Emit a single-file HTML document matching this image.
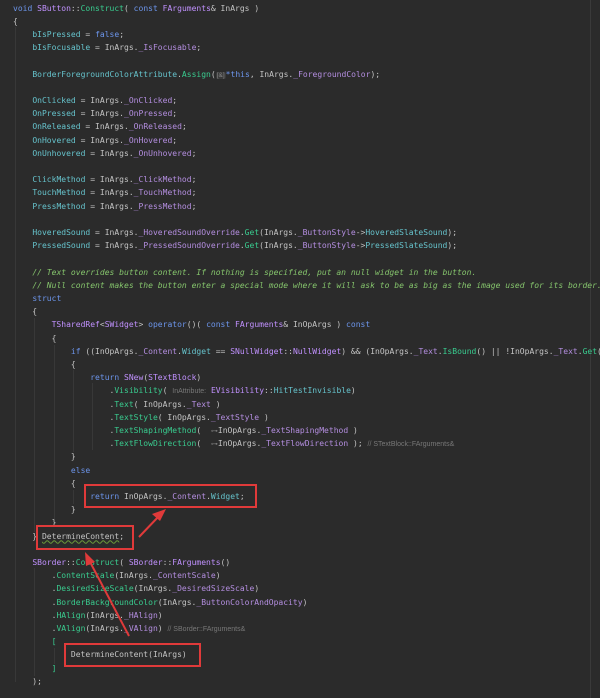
<!DOCTYPE html>
<html><head><meta charset="utf-8"><style>
html,body{margin:0;padding:0;background:#2b2b2b;width:600px;height:698px;overflow:hidden;position:relative}
pre{position:absolute;left:13px;top:1.5px;margin:0;font-family:"DejaVu Sans Mono","Liberation Mono",monospace;font-size:8.02px;line-height:13.21px;color:#c4c4c4;white-space:pre}
pre span{line-height:1}
.k{color:#6c95eb}.t{color:#c191ff}.m{color:#39cc8f}.f{color:#66c3cc}.c{color:#85c46c;font-style:italic}.p{color:#b48ee0}
.h{font-family:"Liberation Sans",sans-serif;font-size:7px;color:#787878}
.hb{font-family:"Liberation Sans",sans-serif;font-size:6.5px;color:#888;background:#3a3a3a;border-radius:2px;padding:0 1px}
.w{text-decoration:underline wavy #6a9a3a;text-decoration-thickness:1px}
.g{position:absolute;width:1px;background:#383838}
.box{position:absolute;border:2px solid #e03a3a;box-sizing:border-box}
.margin{position:absolute;left:590px;top:0;width:1px;height:698px;background:#3a3a3a}
</style></head><body>
<div class="margin"></div>
<div class="g" style="left:15px;top:27px;height:655px"></div>
<div class="g" style="left:34px;top:318px;height:214px"></div>
<div class="g" style="left:54px;top:345px;height:175px"></div>
<div class="g" style="left:73px;top:370px;height:82px"></div>
<div class="g" style="left:92px;top:383px;height:67px"></div>
<div class="g" style="left:73px;top:490px;height:14px"></div>
<div class="g" style="left:34px;top:568px;height:108px"></div>
<div class="g" style="left:54px;top:648px;height:16px"></div>
<pre><span class="k">void</span> <span class="t">SButton</span>::<span class="m">Construct</span>( <span class="k">const</span> <span class="t">FArguments</span>&amp; InArgs )
{
    <span class="f">bIsPressed</span> = <span class="k">false</span>;
    <span class="f">bIsFocusable</span> = InArgs.<span class="p">_IsFocusable</span>;

    <span class="f">BorderForegroundColorAttribute</span>.<span class="m">Assign</span>(<span class="hb">[&amp;]</span><span class="k">*this</span>, InArgs.<span class="p">_ForegroundColor</span>);

    <span class="f">OnClicked</span> = InArgs.<span class="p">_OnClicked</span>;
    <span class="f">OnPressed</span> = InArgs.<span class="p">_OnPressed</span>;
    <span class="f">OnReleased</span> = InArgs.<span class="p">_OnReleased</span>;
    <span class="f">OnHovered</span> = InArgs.<span class="p">_OnHovered</span>;
    <span class="f">OnUnhovered</span> = InArgs.<span class="p">_OnUnhovered</span>;

    <span class="f">ClickMethod</span> = InArgs.<span class="p">_ClickMethod</span>;
    <span class="f">TouchMethod</span> = InArgs.<span class="p">_TouchMethod</span>;
    <span class="f">PressMethod</span> = InArgs.<span class="p">_PressMethod</span>;

    <span class="f">HoveredSound</span> = InArgs.<span class="p">_HoveredSoundOverride</span>.<span class="m">Get</span>(InArgs.<span class="p">_ButtonStyle</span>-&gt;<span class="f">HoveredSlateSound</span>);
    <span class="f">PressedSound</span> = InArgs.<span class="p">_PressedSoundOverride</span>.<span class="m">Get</span>(InArgs.<span class="p">_ButtonStyle</span>-&gt;<span class="f">PressedSlateSound</span>);

    <span class="c">// Text overrides button content. If nothing is specified, put an null widget in the button.</span>
    <span class="c">// Null content makes the button enter a special mode where it will ask to be as big as the image used for its border.</span>
    <span class="k">struct</span>
    {
        <span class="t">TSharedRef</span>&lt;<span class="t">SWidget</span>&gt; <span class="k">operator</span>()( <span class="k">const</span> <span class="t">FArguments</span>&amp; InOpArgs ) <span class="k">const</span>
        {
            <span class="k">if</span> ((InOpArgs.<span class="p">_Content</span>.<span class="f">Widget</span> == <span class="t">SNullWidget</span>::<span class="t">NullWidget</span>) &amp;&amp; (InOpArgs.<span class="p">_Text</span>.<span class="m">IsBound</span>() || !InOpArgs.<span class="p">_Text</span>.<span class="m">Get</span>(
            {
                <span class="k">return</span> <span class="t">SNew</span>(<span class="t">STextBlock</span>)
                    .<span class="m">Visibility</span>( <span class="h">InAttribute:</span> <span class="t">EVisibility</span>::<span class="f">HitTestInvisible</span>)
                    .<span class="m">Text</span>( InOpArgs.<span class="p">_Text</span> )
                    .<span class="m">TextStyle</span>( InOpArgs.<span class="p">_TextStyle</span> )
                    .<span class="m">TextShapingMethod</span>(  <span class="h">⊶</span>InOpArgs.<span class="p">_TextShapingMethod</span> )
                    .<span class="m">TextFlowDirection</span>(  <span class="h">⊶</span>InOpArgs.<span class="p">_TextFlowDirection</span> ); <span class="h">// STextBlock::FArguments&amp;</span>
            }
            <span class="k">else</span>
            {
                <span class="k">return</span> InOpArgs.<span class="p">_Content</span>.<span class="f">Widget</span>;
            }
        }
    } <span class="w">DetermineContent</span>;

    <span class="t">SBorder</span>::<span class="m">Construct</span>( <span class="t">SBorder</span>::<span class="t">FArguments</span>()
        .<span class="m">ContentScale</span>(InArgs.<span class="p">_ContentScale</span>)
        .<span class="m">DesiredSizeScale</span>(InArgs.<span class="p">_DesiredSizeScale</span>)
        .<span class="m">BorderBackgroundColor</span>(InArgs.<span class="p">_ButtonColorAndOpacity</span>)
        .<span class="m">HAlign</span>(InArgs.<span class="p">_HAlign</span>)
        .<span class="m">VAlign</span>(InArgs.<span class="p">_VAlign</span>) <span class="h">// SBorder::FArguments&amp;</span>
        <span class="m">[</span>
            DetermineContent(InArgs)
        <span class="m">]</span>
    );
</pre>
<div class="box" style="left:84px;top:484px;width:173px;height:24px"></div>
<div class="box" style="left:36px;top:525px;width:98px;height:25px"></div>
<div class="box" style="left:64px;top:643px;width:137px;height:24px"></div>
<svg width="600" height="698" style="position:absolute;left:0;top:0" viewBox="0 0 600 698">
<g stroke="#e03a3a" stroke-width="2" fill="#e03a3a">
<line x1="139" y1="537" x2="160" y2="515"/>
<polygon points="166,509 152,514 160,521" stroke="none"/>
<line x1="129" y1="636" x2="89" y2="560"/>
<polygon points="85,552 86,566 95,562" stroke="none"/>
</g>
</svg>
</body></html>
